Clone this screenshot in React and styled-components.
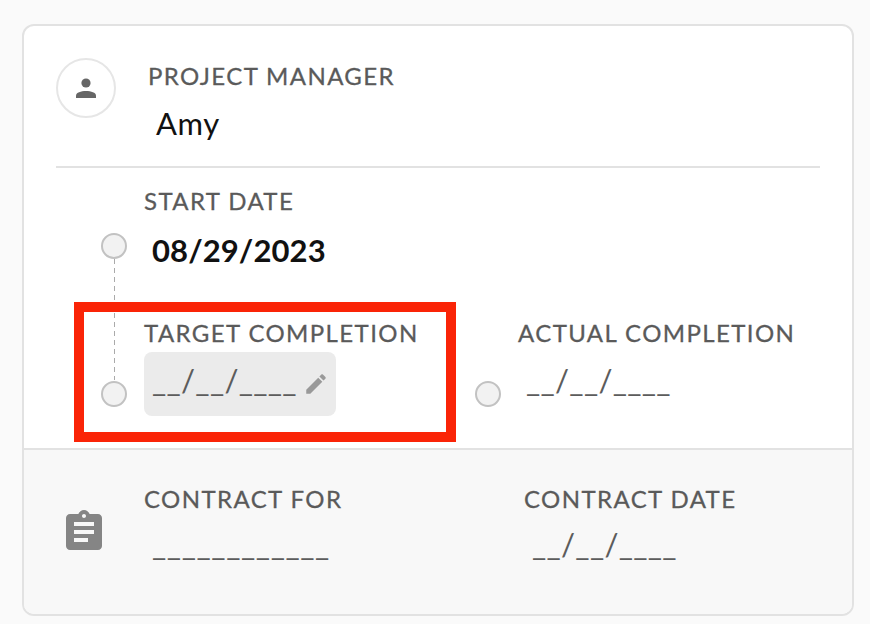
import React from "react";
import styled, { createGlobalStyle } from "styled-components";

const Global = createGlobalStyle`
  html, body { margin: 0; padding: 0; background: #fafafa; }
  body { font-family: "Lato", "Noto Sans", sans-serif; }
`;

const Page = styled.div`
  width: 870px;
  height: 624px;
  box-sizing: border-box;
  padding: 24px 16px 8px 22px;
  overflow: hidden;
`;

const Card = styled.section`
  position: relative;
  width: 832px;
  height: 592px;
  box-sizing: border-box;
  border: 2px solid #e2e2e2;
  border-radius: 12px;
  background: #fff;
  display: flex;
  flex-direction: column;
  overflow: hidden;
`;

const Manager = styled.div`
  margin: 0 32px;
  height: 142px;
  padding-top: 32px;
  box-sizing: border-box;
  border-bottom: 2px solid #e2e2e2;
  display: flex;
  gap: 32px;
`;

const Avatar = styled.div`
  width: 60px;
  height: 60px;
  box-sizing: border-box;
  border: 2px solid #e6e6e6;
  border-radius: 50%;
  display: flex;
  align-items: center;
  justify-content: center;
  color: #666;
`;

const Label = styled.div`
  font-size: 24px;
  line-height: 30px;
  letter-spacing: 1.4px;
  color: #5a5a5a;
  -webkit-text-stroke: 0.3px #5a5a5a;
  text-transform: uppercase;
  white-space: nowrap;
`;

const Value = styled.div`
  font-size: 31px;
  line-height: 40px;
  padding-left: 8px;
  color: ${(p) => (p.$muted ? "#5c5c5c" : "#111")};
  font-weight: ${(p) => (p.$bold ? 700 : 400)};
  letter-spacing: ${(p) => p.$spacing ?? 0}px;
  white-space: nowrap;
  margin-top: ${(p) => p.$lift ?? 0}px;
`;

const ManagerText = styled.div`
  display: flex;
  flex-direction: column;
  gap: 12px;
  margin-top: 3px;
`;

const Timeline = styled.div`
  position: relative;
  height: 280px;
  padding: 18px 0 0 78px;
  box-sizing: border-box;
  display: flex;
  flex-direction: column;
  gap: 48px;
  &::before {
    content: "";
    position: absolute;
    left: 90px;
    top: 91px;
    width: 1px;
    height: 121px;
    background: repeating-linear-gradient(to bottom, #aaa 0 5px, transparent 5px 9px);
  }
`;

const Row = styled.div`
  display: flex;
  align-items: flex-start;
`;

const Milestone = styled.div`
  width: ${(p) => p.$width || "auto"};
  display: grid;
  grid-template-columns: 26px auto;
  grid-template-rows: ${(p) => (p.$tall ? "auto 64px" : "auto auto")};
  column-gap: 16px;
  row-gap: ${(p) => p.$rowGap || 0}px;
  justify-content: start;
  align-items: center;
`;

const Dot = styled.span`
  grid-column: 1;
  grid-row: 2;
  width: 26px;
  height: 26px;
  box-sizing: border-box;
  border: 2px solid #c2c2c2;
  border-radius: 50%;
  background: #f2f2f2;
  position: relative;
  z-index: 1;
  margin-left: -1px;
  margin-top: ${(p) => p.$offset || 0}px;
`;

const Cell = styled.div`
  grid-column: 2;
  grid-row: ${(p) => p.$row};
`;

const EditBox = styled.div`
  width: 192px;
  height: 64px;
  box-sizing: border-box;
  padding: 0 7px 0 8px;
  border-radius: 8px;
  background: #ebebeb;
  display: flex;
  align-items: center;
  justify-content: space-between;
  color: #999;
`;

const Blank = styled.span`
  font-size: 31px;
  line-height: 40px;
  color: #5c5c5c;
  letter-spacing: 0.3px;
  white-space: nowrap;
  margin-top: -8px;
`;

const Footer = styled.footer`
  flex: 1;
  border-top: 2px solid #e2e2e2;
  background: #f8f8f8;
  display: flex;
  padding: 34px 0 0 36px;
`;

const ClipIcon = styled.div`
  width: 48px;
  height: 48px;
  margin-top: 24px;
  margin-right: 36px;
  color: #858585;
`;

const FooterField = styled.div`
  width: ${(p) => p.$width}px;
  display: flex;
  flex-direction: column;
  gap: 12px;
`;

const Callout = styled.div`
  position: absolute;
  left: 50px;
  top: 276px;
  width: 382px;
  height: 140px;
  box-sizing: border-box;
  border: 10px solid #fa2407;
  pointer-events: none;
`;

const PersonIcon = () => (
  <svg width="20" height="20" viewBox="0 0 20 20" fill="currentColor">
    <circle cx="10" cy="5" r="4.6" />
    <path d="M0 20v-2.5c0-2.8 5-4.5 10-4.5s10 1.7 10 4.5V20z" />
  </svg>
);

const PencilIcon = () => (
  <svg width="26" height="26" viewBox="0 0 24 24" fill="currentColor">
    <path d="M3 17.25V21h3.75L17.81 9.94l-3.75-3.75L3 17.25zM20.71 7.04c.39-.39.39-1.02 0-1.41l-2.34-2.34c-.39-.39-1.02-.39-1.41 0l-1.83 1.83 3.75 3.75 1.83-1.83z" />
  </svg>
);

const ClipboardIcon = () => (
  <svg width="48" height="48" viewBox="0 0 24 24" fill="currentColor">
    <path d="M19 3h-4.18C14.4 1.84 13.3 1 12 1c-1.3 0-2.4.84-2.82 2H5c-1.1 0-2 .9-2 2v14c0 1.1.9 2 2 2h14c1.1 0 2-.9 2-2V5c0-1.1-.9-2-2-2zm-7 0c.55 0 1 .45 1 1s-.45 1-1 1-1-.45-1-1 .45-1 1-1zm2 14H7v-2h7v2zm3-4H7v-2h10v2zm0-4H7V7h10v2z" />
  </svg>
);

export default function App() {
  return (
    <Page>
      <Global />
      <Card>
        <Manager>
          <Avatar>
            <PersonIcon />
          </Avatar>
          <ManagerText>
            <Label>Project Manager</Label>
            <Value $spacing={0.6}>Amy</Value>
          </ManagerText>
        </Manager>
        <Timeline>
          <Row>
            <Milestone $rowGap={14}>
              <Cell $row={1}>
                <Label>Start Date</Label>
              </Cell>
              <Dot $offset={-8} />
              <Cell $row={2}>
                <Value $bold $spacing={0.1}>08/29/2023</Value>
              </Cell>
            </Milestone>
          </Row>
          <Row>
            <Milestone $width="374px" $rowGap={4} $tall>
              <Cell $row={1}>
                <Label>Target Completion</Label>
              </Cell>
              <Dot $offset={20} />
              <Cell $row={2}>
                <EditBox>
                  <Blank>__/__/____</Blank>
                  <PencilIcon />
                </EditBox>
              </Cell>
            </Milestone>
            <Milestone $rowGap={4} $tall>
              <Cell $row={1}>
                <Label>Actual Completion</Label>
              </Cell>
              <Dot $offset={20} />
              <Cell $row={2}>
                <Value $muted $lift={-8} $spacing={0.3}>__/__/____</Value>
              </Cell>
            </Milestone>
          </Row>
        </Timeline>
        <Footer>
          <ClipIcon>
            <ClipboardIcon />
          </ClipIcon>
          <FooterField $width={380}>
            <Label>Contract For</Label>
            <Value $muted $lift={-2} $spacing={0.6}>____________</Value>
          </FooterField>
          <FooterField $width={300}>
            <Label>Contract Date</Label>
            <Value $muted $lift={-2} $spacing={0.3}>__/__/____</Value>
          </FooterField>
        </Footer>
        <Callout />
      </Card>
    </Page>
  );
}
